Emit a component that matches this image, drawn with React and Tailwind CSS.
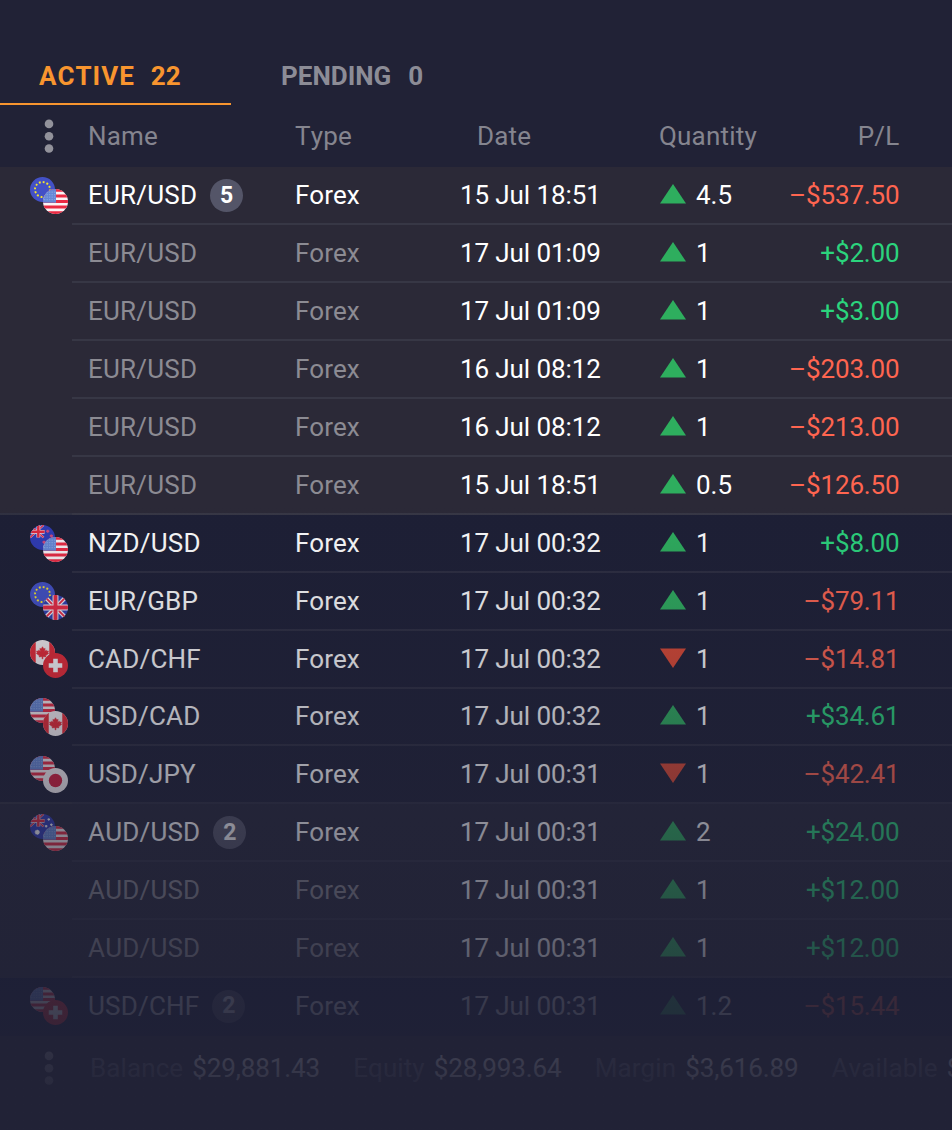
import React from 'react'

const positions = [
  { name: 'EUR/USD', flags: ['eu', 'us'], count: 5, date: '15 Jul 18:51', qty: '4.5', pl: '–$537.50', tone: 'open' },
  { name: 'EUR/USD', sub: true, date: '17 Jul 01:09', qty: '1', pl: '+$2.00', tone: 'open' },
  { name: 'EUR/USD', sub: true, date: '17 Jul 01:09', qty: '1', pl: '+$3.00', tone: 'open' },
  { name: 'EUR/USD', sub: true, date: '16 Jul 08:12', qty: '1', pl: '–$203.00', tone: 'open' },
  { name: 'EUR/USD', sub: true, date: '16 Jul 08:12', qty: '1', pl: '–$213.00', tone: 'open' },
  { name: 'EUR/USD', sub: true, date: '15 Jul 18:51', qty: '0.5', pl: '–$126.50', tone: 'open', last: true },
  { name: 'NZD/USD', flags: ['nz', 'us'], date: '17 Jul 00:32', qty: '1', pl: '+$8.00', tone: 'plain' },
  { name: 'EUR/GBP', flags: ['eu', 'gb'], date: '17 Jul 00:32', qty: '1', pl: '–$79.11', tone: 'plain' },
  { name: 'CAD/CHF', flags: ['ca', 'ch'], date: '17 Jul 00:32', qty: '1', pl: '–$14.81', short: true, tone: 'plain' },
  { name: 'USD/CAD', flags: ['us', 'ca'], date: '17 Jul 00:32', qty: '1', pl: '+$34.61', tone: 'plain' },
  { name: 'USD/JPY', flags: ['us', 'jp'], date: '17 Jul 00:31', qty: '1', pl: '–$42.41', short: true, tone: 'plain', last: true },
  { name: 'AUD/USD', flags: ['au', 'us'], count: 2, date: '17 Jul 00:31', qty: '2', pl: '+$24.00', tone: 'soft' },
  { name: 'AUD/USD', sub: true, date: '17 Jul 00:31', qty: '1', pl: '+$12.00', tone: 'soft' },
  { name: 'AUD/USD', sub: true, date: '17 Jul 00:31', qty: '1', pl: '+$12.00', tone: 'soft' },
  { name: 'USD/CHF', flags: ['us', 'ch'], count: 2, date: '17 Jul 00:31', qty: '1.2', pl: '–$15.44', tone: 'deep' },
]

const TONES = {
  open: { row: 'h-[58px] bg-[#2b2937]', line: 'border-[#373745]', flags: '', content: '' },
  plain: { row: 'h-[57.85px] bg-[#1d1f35]', line: 'border-[#2d2e41]', flags: '', content: '' },
  soft: { row: 'h-[57.9px] bg-[#252639]', line: 'border-[#2f3043]', flags: '', content: '' },
  deep: { row: 'h-[58px] bg-[#131836]', line: 'border-transparent', flags: 'opacity-75', content: 'opacity-55' },
}

const totals = [
  { label: 'Balance', value: '$29,881.43' },
  { label: 'Equity', value: '$28,993.64' },
  { label: 'Margin', value: '$3,616.89' },
  { label: 'Available', value: '$25,376.75' },
]

const MAPLE = 'M12 6.5l1.2 2.2 1.3-.6-.5 3 1.6-1.3.5 1 1.6-.2-.6 1.6.8.6-3 2.4.3 1-2.8-.4v2.2h-.8v-2.2l-2.8.4.3-1-3-2.4.8-.6-.6-1.6 1.6.2.5-1 1.6 1.3-.5-3 1.3.6z'

// small union flag used in the canton of NZ and AU
function Canton() {
  return (
    <>
      <path d="M0 0l13 12M13 0L0 12" stroke="#c9bfe0" strokeWidth="2.2" />
      <path d="M0 0l13 12M13 0L0 12" stroke="#e0283f" strokeWidth="1.2" />
      <path d="M8 0v12M0 6.5h14" stroke="#e8dcea" strokeWidth="3.6" />
      <path d="M8 0v12M0 6.5h14" stroke="#e0283f" strokeWidth="2.4" />
    </>
  )
}

const FLAGS = {
  eu: (
    <>
      <rect width="24" height="24" fill="#4351c6" />
      <circle cx="12" cy="12" r="7.2" fill="none" stroke="#f5e62b" strokeWidth="1.8" strokeDasharray="1.8 1.97" />
    </>
  ),
  us: (
    <>
      <rect width="24" height="24" fill="#fbf3f5" />
      <path d="M0 1.4h24M0 6.7h24M0 12h24M0 17.3h24M0 22.6h24" stroke="#e92a43" strokeWidth="2.7" />
      <rect width="12.5" height="13.2" fill="#6587d6" />
      <path d="M1 3h11M1 5.4h11M1 7.8h11M1 10.2h11" stroke="#84a3e2" strokeWidth="1" strokeDasharray="1.2 1.2" />
    </>
  ),
  gb: (
    <>
      <rect width="24" height="24" fill="#2f40b0" />
      <path d="M0 0l24 24M24 0L0 24" stroke="#f4eff6" strokeWidth="4" />
      <path d="M0 0l24 24M24 0L0 24" stroke="#e92a43" strokeWidth="1.8" />
      <path d="M12 0v24M0 12h24" stroke="#f4eff6" strokeWidth="5.6" />
      <path d="M12 0v24M0 12h24" stroke="#e92a43" strokeWidth="3.8" />
    </>
  ),
  ca: (
    <>
      <rect width="24" height="24" fill="#fbf6f8" />
      <path d="M0 0h5.5v24H0zM18.5 0H24v24h-5.5z" fill="#e92a35" />
      <path d={MAPLE} fill="#e92a35" stroke="#e92a35" strokeWidth=".6" />
    </>
  ),
  ch: (
    <>
      <rect width="24" height="24" fill="#e92a35" />
      <path d="M12 5.5v13M5.5 12h13" stroke="#ffffff" strokeWidth="4.4" />
    </>
  ),
  jp: (
    <>
      <rect width="24" height="24" fill="#fbf6f8" />
      <circle cx="12" cy="12" r="6.4" fill="#d81e3e" />
    </>
  ),
  nz: (
    <>
      <rect width="24" height="24" fill="#2f3bb4" />
      <Canton />
      <path d="M17 4.5v3M15.5 6h3M20.5 9v3M19 10.5h3M13.5 15v3M12 16.5h3" stroke="#d0487c" strokeWidth="1.6" />
    </>
  ),
  au: (
    <>
      <rect width="24" height="24" fill="#2f3bb4" />
      <Canton />
      <path d="M7 15v5M4.5 17.5h5M5.3 15.8l3.4 3.4M8.7 15.8l-3.4 3.4" stroke="#ffffff" strokeWidth="1.2" />
      <path d="M18 4v2.4M16.8 5.2h2.4M20.5 9v2.4M19.3 10.2h2.4M15.5 10.5v2.4M14.3 11.7h2.4M17.5 17v2.4M16.3 18.2h2.4" stroke="#ffffff" strokeWidth="1.1" />
    </>
  ),
}

function Flag({ code, className = '' }) {
  return (
    <svg viewBox="0 0 24 24" className={`size-[25px] shrink-0 rounded-full ${className}`}>
      {FLAGS[code]}
    </svg>
  )
}

function Dots() {
  return (
    <svg width="10" height="34" viewBox="0 0 10 34" fill="#92929b" className="shrink-0">
      <circle cx="5" cy="4.9" r="4.3" />
      <circle cx="5" cy="17.2" r="4.3" />
      <circle cx="5" cy="29.5" r="4.3" />
    </svg>
  )
}

function Arrow({ down }) {
  return (
    <svg width="26" height="20" viewBox="0 0 26 20" className="mb-[2px] shrink-0">
      {down ? <path d="M0 .5h26L13 20z" fill="#e04a33" /> : <path d="M13 0l13 19.5H0z" fill="#2eae5e" />}
    </svg>
  )
}

function Row({ row }) {
  const tone = TONES[row.tone]

  return (
    <div className={`flex shrink-0 ${tone.row}`}>
      {/* Flags */}
      <div className={`flex w-[72px] shrink-0 items-start border-b-2 pt-[9.5px] pl-[30px] ${tone.flags} ${row.last ? 'border-[#303141]' : 'border-transparent'}`}>
        {row.flags && (
          <>
            <Flag code={row.flags[0]} />
            <Flag code={row.flags[1]} className="mt-[12.5px] -ml-[12.5px]" />
          </>
        )}
      </div>
      <div className={`flex flex-1 items-center border-b-2 pl-4 text-white ${tone.line} ${tone.content}`}>
        <div className={`flex w-[207px] items-center gap-[13px] tracking-[0.2px] ${row.sub ? 'text-[#8c8b93]' : ''}`}>
          {row.name}
          {row.count && (
            <span className="mt-px flex size-[33px] items-center justify-center rounded-full bg-[#545568] text-[23px] font-bold">
              {row.count}
            </span>
          )}
        </div>
        <div className={`w-[165px] ${row.sub ? 'text-[#8c8b93]' : ''}`}>Forex</div>
        <div className="w-[200px] tracking-[-0.1px]">{row.date}</div>
        <div className="flex items-center gap-[10px]">
          <Arrow down={row.short} />
          {row.qty}
        </div>
        <div className={`flex-1 pr-[52.5px] text-right tracking-[-0.15px] ${row.pl[0] === '+' ? 'text-[#2bd47d]' : 'text-[#ff6550]'}`}>
          {row.pl}
        </div>
      </div>
    </div>
  )
}

function App() {
  return (
    <div className="relative flex h-[1130px] w-[952px] flex-col overflow-hidden bg-[#212236] font-['Roboto',sans-serif] text-[26px] leading-8 whitespace-nowrap [font-kerning:none]">
      {/* Tabs */}
      <div className="flex h-[105px] shrink-0 items-end font-bold">
        <div className="flex h-[45px] w-[231px] gap-4 border-b-2 border-[#f8952f] pl-[39px] text-[#f8952f]">
          <span className="tracking-[1px]">ACTIVE</span>
          <span>22</span>
        </div>
        <div className="flex h-[45px] gap-[17px] pl-[50px] text-[#8c8c96]">
          <span>PENDING</span>
          <span>0</span>
        </div>
      </div>

      {/* Column titles */}
      <div className="flex h-[62px] shrink-0 items-center pl-11 tracking-[0.2px] text-[#85858f]">
        <Dots />
        <div className="ml-[34px] w-[207px]">Name</div>
        <div className="w-[182px]">Type</div>
        <div className="w-[182px]">Date</div>
        <div>Quantity</div>
        <div className="flex-1 pr-[52.5px] text-right">P/L</div>
      </div>

      {positions.map((row, i) => (
        <Row key={i} row={row} />
      ))}

      {/* Account summary */}
      <div className="flex h-[64px] shrink-0 items-center gap-[33px] pl-11 text-[#6c6d7f]">
        <Dots />
        {totals.map(total => (
          <div key={total.label} className="flex gap-[9px] first-of-type:ml-[3px]">
            <span className="tracking-[0.1px]">{total.label}</span>
            <span className="tracking-[-0.1px] text-white">{total.value}</span>
          </div>
        ))}
      </div>

      {/* Fade out towards the bottom */}
      <div className="pointer-events-none absolute inset-x-0 top-[500px] bottom-0 bg-linear-to-b from-[#212236]/0 to-[#212236]" />
    </div>
  )
}

export default App
